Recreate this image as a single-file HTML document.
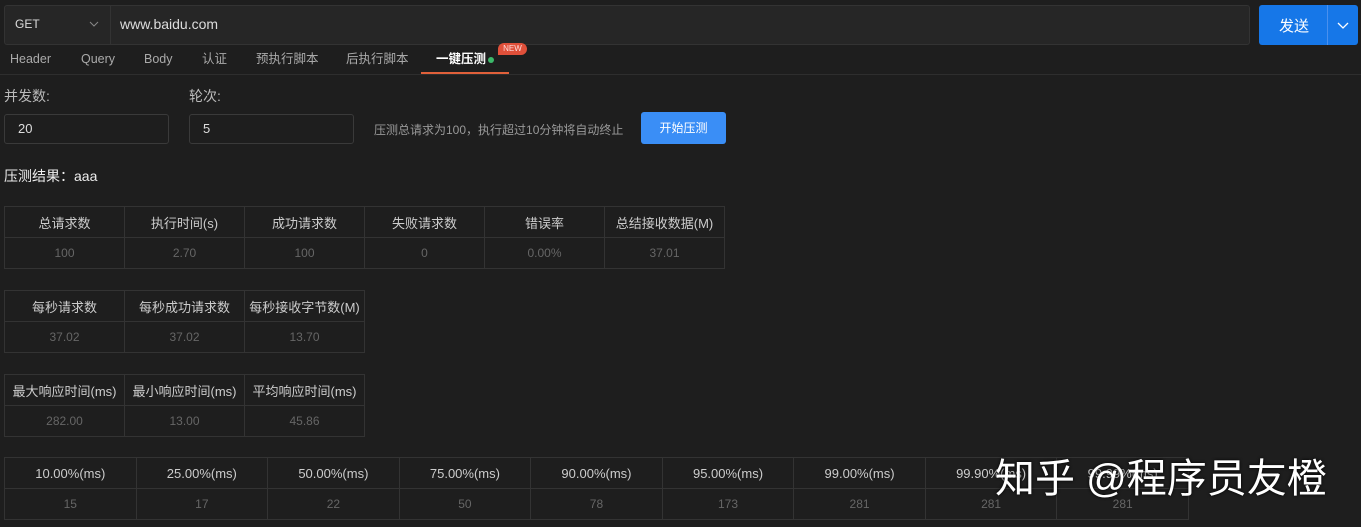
<!DOCTYPE html>
<html><head><meta charset="utf-8"><style>
*{box-sizing:border-box;margin:0;padding:0}
body{width:1361px;height:527px;background:#1e1e1e;font-family:"Liberation Sans","Noto Sans CJK SC",sans-serif;color:#ccc;position:relative;overflow:hidden;font-size:13px}
.a{position:absolute}
.bar{left:4px;top:5px;width:1246px;height:40px;background:#262626;border:1px solid #333;border-radius:3px}
.send{left:1259px;top:5px;width:99px;height:40px;background:#1677e8;border-radius:3px;color:#fff}
.tab{top:50px;height:18px;line-height:18px;font-size:12.5px;color:#aaa}
.inp{height:30px;width:165px;border:1px solid #3a3a3a;border-radius:3px;background:#1e1e1e;padding-left:13px;line-height:28px;color:#ddd}
table{position:absolute;border-collapse:collapse;table-layout:fixed}
td{border:1px solid #333;text-align:center;height:31px;font-size:13px;white-space:nowrap;overflow:hidden}
tr.h td{color:#ccc}
tr.d td{color:#666;font-size:12px}
</style></head><body>
<div class="a bar"></div>
<div class="a" style="left:15px;top:17px;color:#ddd;font-size:12px">GET</div>
<svg class="a" style="left:89px;top:20px" width="10" height="8"><path d="M1 2l4 4 4-4" stroke="#888" fill="none"/></svg>
<div class="a" style="left:110px;top:5px;width:1px;height:40px;background:#333"></div>
<div class="a" style="left:120px;top:16px;color:#ddd;font-size:14px">www.baidu.com</div>
<div class="a send"><span class="a" style="left:20px;top:10px;font-size:15px">发送</span><div class="a" style="left:68px;top:0;width:1px;height:40px;background:#4a90ee"></div><svg class="a" style="left:77px;top:16px" width="14" height="9"><path d="M2 2l5 5 5-5" stroke="#fff" fill="none" stroke-width="1.3"/></svg></div>
<div class="a tab" style="left:10px">Header</div>
<div class="a tab" style="left:81px">Query</div>
<div class="a tab" style="left:144px">Body</div>
<div class="a tab" style="left:202px">认证</div>
<div class="a tab" style="left:256px">预执行脚本</div>
<div class="a tab" style="left:346px">后执行脚本</div>
<div class="a tab" style="left:436px;color:#fff;font-weight:bold">一键压测</div>
<div class="a" style="left:488px;top:57px;width:6px;height:6px;border-radius:50%;background:#3cb86a"></div>
<div class="a" style="left:498px;top:43px;width:29px;height:12px;border-radius:6px 6px 6px 0;background:#e0503a;color:#fdd;font-size:8px;text-align:center;line-height:12px">NEW</div>
<div class="a" style="left:0;top:74px;width:1361px;height:1px;background:#2e2e2e"></div>
<div class="a" style="left:421px;top:72px;width:88px;height:2px;background:#e0603a"></div>
<div class="a" style="left:4px;top:86px;color:#bbb;font-size:14px">并发数:</div>
<div class="a" style="left:189px;top:86px;color:#bbb;font-size:14px">轮次:</div>
<div class="a inp" style="left:4px;top:114px">20</div>
<div class="a inp" style="left:189px;top:114px">5</div>
<div class="a" style="left:374px;top:121px;color:#999;font-size:12px">压测总请求为100，执行超过10分钟将自动终止</div>
<div class="a" style="left:641px;top:112px;width:85px;height:32px;background:#3a8ef6;border-radius:3px;color:#fff;text-align:center;line-height:32px;font-size:12px">开始压测</div>
<div class="a" style="left:4px;top:166px;color:#eee;font-size:14px">压测结果：aaa</div>
<table style="left:4px;top:206px;width:721px"><tr class="h"><td>总请求数</td><td>执行时间(s)</td><td>成功请求数</td><td>失败请求数</td><td>错误率</td><td>总结接收数据(M)</td></tr><tr class="d"><td>100</td><td>2.70</td><td>100</td><td>0</td><td>0.00%</td><td>37.01</td></tr></table>
<table style="left:4px;top:290px;width:361px"><tr class="h"><td>每秒请求数</td><td>每秒成功请求数</td><td>每秒接收字节数(M)</td></tr><tr class="d"><td>37.02</td><td>37.02</td><td>13.70</td></tr></table>
<table style="left:4px;top:374px;width:361px"><tr class="h"><td>最大响应时间(ms)</td><td>最小响应时间(ms)</td><td>平均响应时间(ms)</td></tr><tr class="d"><td>282.00</td><td>13.00</td><td>45.86</td></tr></table>
<table style="left:4px;top:457px;width:1185px"><tr class="h"><td>10.00%(ms)</td><td>25.00%(ms)</td><td>50.00%(ms)</td><td>75.00%(ms)</td><td>90.00%(ms)</td><td>95.00%(ms)</td><td>99.00%(ms)</td><td>99.90%(ms)</td><td>99.99%(ms)</td></tr><tr class="d"><td>15</td><td>17</td><td>22</td><td>50</td><td>78</td><td>173</td><td>281</td><td>281</td><td>281</td></tr></table>
<div class="a" style="left:995px;top:446px;color:#fff;font-size:40px;white-space:nowrap;text-shadow:0 0 3px #000">知乎 @程序员友橙</div>
</body></html>
